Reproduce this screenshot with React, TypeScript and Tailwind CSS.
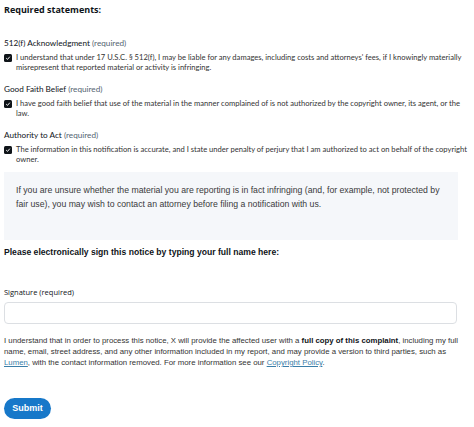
export default function App() {
  const statements = [
    {
      label: "512(f) Acknowledgment",
      text: "I understand that under 17 U.S.C. § 512(f), I may be liable for any damages, including costs and attorneys' fees, if I knowingly materially misrepresent that reported material or activity is infringing.",
    },
    {
      label: "Good Faith Belief",
      text: "I have good faith belief that use of the material in the manner complained of is not authorized by the copyright owner, its agent, or the law.",
    },
    {
      label: "Authority to Act",
      text: "The information in this notification is accurate, and I state under penalty of perjury that I am authorized to act on behalf of the copyright owner.",
    },
  ]

  return (
    <div className="w-[474px] h-[427px] bg-white text-[#0f1419] px-[4px] pt-[4px] overflow-hidden font-['Lato',sans-serif]">
      <h2 className="text-[9px] font-bold leading-[12px] font-['Open_Sans',sans-serif]">Required statements:</h2>

      <div className="mt-[22px] flex flex-col gap-[12px]">
        {statements.map((s) => (
          <div key={s.label}>
            <div className="text-[8.2px] leading-[11px]">
              {s.label} <span className="text-[#536471]">(required)</span>
            </div>
            <label className="mt-[4px] flex items-start gap-[4px]">
              <span className="mt-[1px] flex h-[8px] w-[8px] shrink-0 items-center justify-center rounded-[1.5px] bg-[#0f1419]">
                <svg viewBox="0 0 10 10" className="h-[6px] w-[6px]">
                  <path d="M2 5.2 L4.2 7.3 L8 2.8" fill="none" stroke="white" strokeWidth="1.6" />
                </svg>
              </span>
              <span className="text-[7.6px] leading-[9.5px] text-[#333]">{s.text}</span>
            </label>
          </div>
        ))}
      </div>

      <div className="mt-[8px] w-[454px] h-[68px] bg-[#f5f7fa] px-[12px] pt-[11px] font-['Liberation_Sans',Arial,sans-serif] text-[8.7px] leading-[14px] text-[#3a3a3a]">
        If you are unsure whether the material you are reporting is in fact infringing (and, for example, not protected by
        fair use), you may wish to contact an attorney before filing a notification with us.
      </div>

      <div className="mt-[6px] font-['Liberation_Sans',Arial,sans-serif] text-[8.6px] font-bold leading-[12px]">
        Please electronically sign this notice by typing your full name here:
      </div>

      <div className="mt-[29px] text-[7.5px] leading-[10px] font-['Open_Sans',sans-serif]">Signature (required)</div>
      <input className="mt-[5px] block w-[453px] h-[22px] rounded-[4px] border border-[#dcdfe3] bg-white" />

      <p className="mt-[11px] w-[458px] font-['Liberation_Sans',Arial,sans-serif] text-[7.8px] leading-[11px] text-[#333]">
        I understand that in order to process this notice, X will provide the affected user with a{" "}
        <b className="text-[#0f1419]">full copy of this complaint</b>, including my full name, email, street address, and any
        other information included in my report, and may provide a version to third parties, such as{" "}
        <a className="text-[#3b7ea8] underline">Lumen</a>, with the contact information removed. For more information see our{" "}
        <a className="text-[#3b7ea8] underline">Copyright Policy</a>.
      </p>

      <button className="mt-[30px] w-[47px] h-[21px] rounded-full bg-[#1778c9] font-['Liberation_Sans',Arial,sans-serif] text-[9px] font-bold text-white">
        Submit
      </button>
    </div>
  )
}
